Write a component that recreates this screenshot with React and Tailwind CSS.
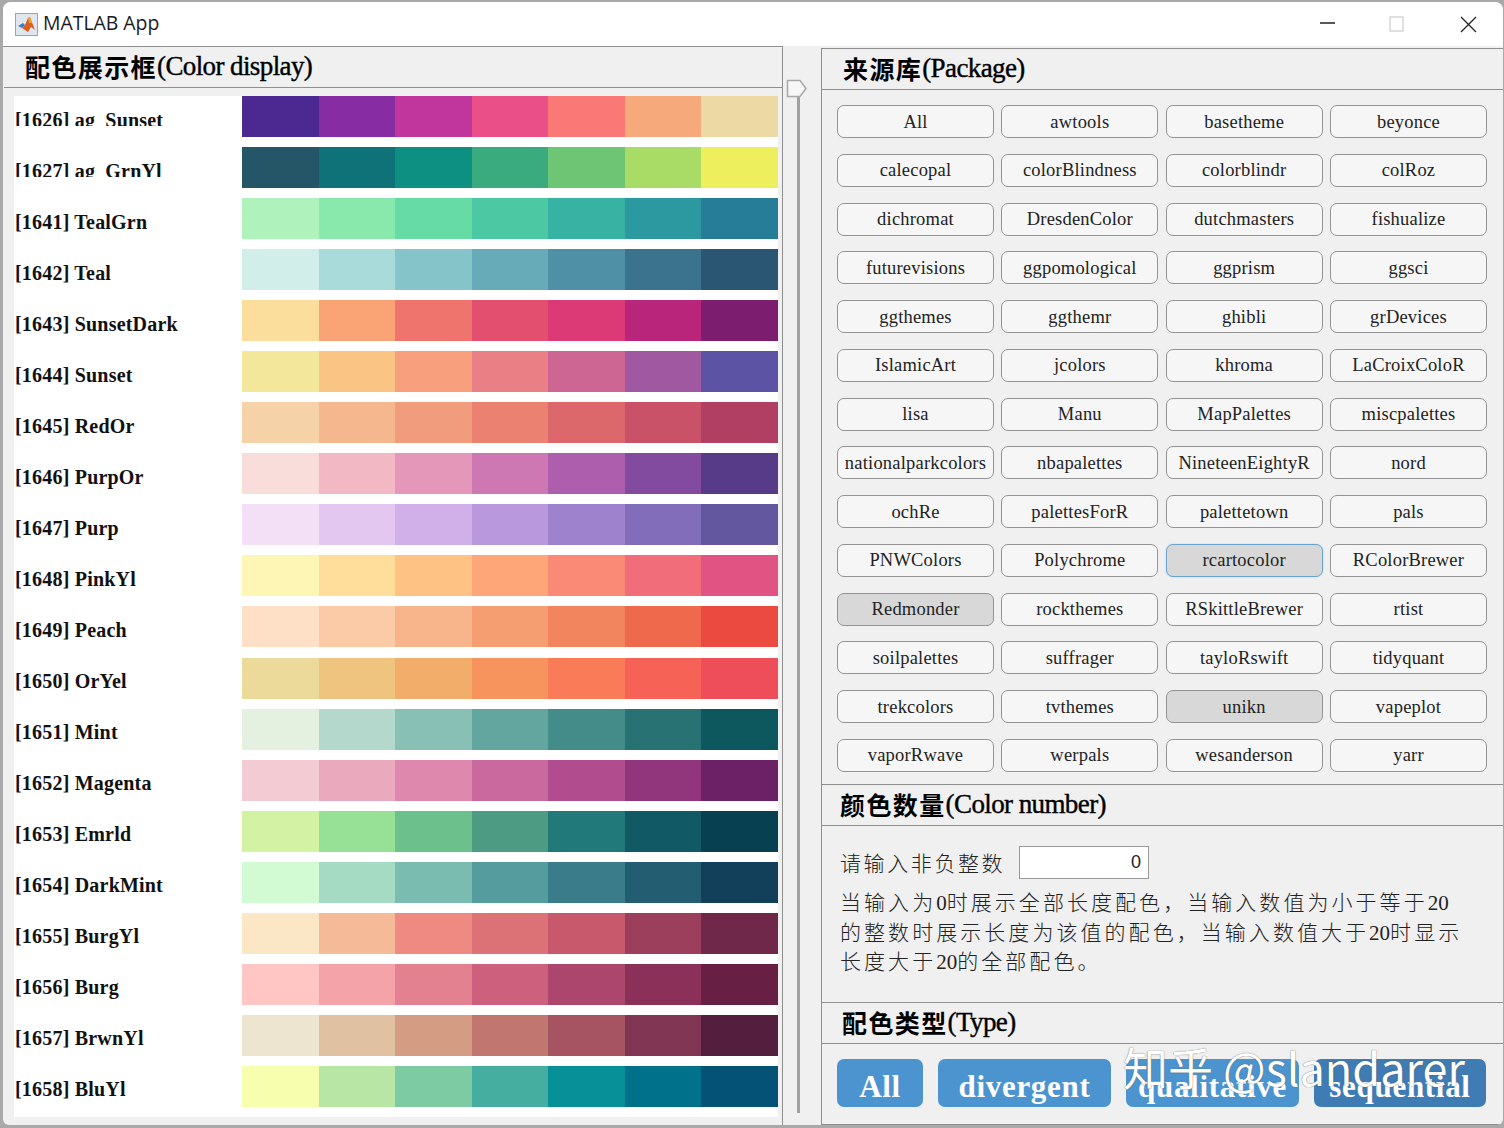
const palettes = [
  ["[1626] ag_Sunset", ["#4b2991","#872ca2","#c0369d","#ea4f88","#fa7876","#f6a97a","#edd9a3"], true],
  ["[1627] ag_GrnYl", ["#245668","#0f7279","#0d8f81","#39ab7e","#6ec574","#a9dc67","#edef5d"], true],
  ["[1641] TealGrn", ["#b0f2bc","#89e8ac","#67dba5","#4cc8a3","#38b2a3","#2c98a0","#257d98"]],
  ["[1642] Teal", ["#d1eeea","#a8dbd9","#85c4c9","#68abb8","#4f90a6","#3b738f","#2a5674"]],
  ["[1643] SunsetDark", ["#fcde9c","#faa476","#f0746e","#e34f6f","#dc3977","#b9257a","#7c1d6f"]],
  ["[1644] Sunset", ["#f3e79b","#fac484","#f8a07e","#eb7f86","#ce6693","#a059a0","#5c53a5"]],
  ["[1645] RedOr", ["#f6d2a9","#f5b78e","#f19c7c","#ea8171","#dd686c","#ca5268","#b13f64"]],
  ["[1646] PurpOr", ["#f9ddda","#f2b9c4","#e597b9","#ce78b3","#ad5fad","#834ba0","#573b88"]],
  ["[1647] Purp", ["#f3e0f7","#e4c7f1","#d1afe8","#b998dd","#9f82ce","#826dba","#63589f"]],
  ["[1648] PinkYl", ["#fef6b5","#ffdd9a","#ffc285","#ffa679","#fa8a76","#f16d7a","#e15383"]],
  ["[1649] Peach", ["#fde0c5","#facba6","#f8b58b","#f59e72","#f2855d","#ef6a4c","#eb4a40"]],
  ["[1650] OrYel", ["#ecda9a","#efc47e","#f3ad6a","#f7945d","#f97b57","#f66356","#ee4d5a"]],
  ["[1651] Mint", ["#e4f1e1","#b4d9cc","#89c0b6","#63a6a0","#448c8a","#287274","#0d585f"]],
  ["[1652] Magenta", ["#f3cbd3","#eaa9bd","#dd88ac","#ca699d","#b14d8e","#91357d","#6c2167"]],
  ["[1653] Emrld", ["#d3f2a3","#97e196","#6cc08b","#4c9b82","#217a79","#105965","#074050"]],
  ["[1654] DarkMint", ["#d2fbd4","#a5dbc2","#7bbcb0","#559c9e","#3a7c89","#235d72","#123f5a"]],
  ["[1655] BurgYl", ["#fbe6c5","#f5ba98","#ee8a82","#dc7176","#c8586c","#9c3f5d","#70284a"]],
  ["[1656] Burg", ["#ffc6c4","#f4a3a8","#e38191","#cc607d","#ad466c","#8b3058","#672044"]],
  ["[1657] BrwnYl", ["#ede5cf","#e0c2a2","#d39c83","#c1766f","#a65461","#813753","#541f3f"]],
  ["[1658] BluYl", ["#f7feae","#b7e6a5","#7ccba2","#46aea0","#089099","#00718b","#045275"]],
];

const packages = ["All","awtools","basetheme","beyonce","calecopal","colorBlindness","colorblindr","colRoz","dichromat","DresdenColor","dutchmasters","fishualize","futurevisions","ggpomological","ggprism","ggsci","ggthemes","ggthemr","ghibli","grDevices","IslamicArt","jcolors","khroma","LaCroixColoR","lisa","Manu","MapPalettes","miscpalettes","nationalparkcolors","nbapalettes","NineteenEightyR","nord","ochRe","palettesForR","palettetown","pals","PNWColors","Polychrome","rcartocolor","RColorBrewer","Redmonder","rockthemes","RSkittleBrewer","rtist","soilpalettes","suffrager","tayloRswift","tidyquant","trekcolors","tvthemes","unikn","vapeplot","vaporRwave","werpals","wesanderson","yarr"];

const serif = "font-['Liberation_Serif','Noto_Sans_CJK_SC',serif]";

function Heading({ cjk, latin, cls }) {
  return (
    <div className={"h-[41px] shrink-0 flex items-center border-b border-[#8f8f8f] text-black pb-[2px] font-['Liberation_Serif',serif] " + cls}>
      <span className="font-['Noto_Sans_CJK_SC',sans-serif] font-bold text-[25px] tracking-[1.4px] leading-none">{cjk}</span>
      <span className="text-[27px] tracking-[-0.6px] leading-none [-webkit-text-stroke:0.4px_black]">{latin}</span>
    </div>
  );
}

function PackageButton({ name }) {
  let state = "bg-[#f6f6f6] border-[#939393]";
  if (name === "rcartocolor") state = "bg-[#d8d8d8] border-[#6ba3cf] shadow-[0_0_2px_#a9d4f2]";
  if (name === "Redmonder" || name === "unikn") state = "bg-[#d8d8d8] border-[#939393]";
  return (
    <div className={"h-[33px] rounded-[7px] border flex items-center justify-center whitespace-nowrap text-[18.5px] tracking-[0.2px] text-[#222] pt-[2px] " + state}>
      {name}
    </div>
  );
}

function TypeButton({ w, dark, children }) {
  return (
    <div className={"h-[48px] rounded-[7px] flex items-center justify-center text-white font-bold text-[31px] tracking-[0.7px] pt-[8px] " + w + " " + (dark ? "bg-[#3f7cb3]" : "bg-[#4c94d0]")}>
      {children}
    </div>
  );
}

function MatlabIcon() {
  return (
    <div className="w-[23px] h-[23px] bg-[#dfe6ee] border border-[#9aa5b1] flex items-center justify-center">
      <svg width="19" height="19" viewBox="0 0 19 19">
        <path d="M1 11 L6 8 L8 10 L5 13 Z" fill="#3a7fc4" />
        <path d="M5 13 L8 10 L11 3 L13 2 L18 15 L14 12 L11 17 Z" fill="#d9601f" />
        <path d="M11 3 L13 2 L15 8 L12 8 Z" fill="#f0a030" />
      </svg>
    </div>
  );
}

function Digits({ children }) {
  return <span className="tracking-normal">{children}</span>;
}

export default function App() {
  return (
    <div className="relative w-[1504px] h-[1128px] overflow-hidden bg-[#a9a9a9] pt-[2px] pl-[3px] pr-[1px] pb-[3px]">
      <div className="w-full h-full flex flex-col bg-[#f0f0f0] rounded-t-[8px] rounded-b-[6px] overflow-hidden">
        <div className="h-[44px] shrink-0 bg-white flex items-center pl-[12px]">
          <MatlabIcon />
          <span className="ml-[5px] mb-[2px] text-[19.4px] text-[#1a1a1a] font-['Open_Sans',sans-serif]">MATLAB App</span>
          <div className="ml-auto flex items-center">
            <svg width="16" height="16" viewBox="0 0 16 16" className="mr-[53px] mb-[2px]"><path d="M0 8 H15" stroke="#222" strokeWidth="1.3" /></svg>
            <svg width="15" height="16" viewBox="0 0 15 16" className="mr-[56px]"><rect x="1" y="1" width="13" height="14" fill="none" stroke="#d0d0d0" strokeWidth="1.3" /></svg>
            <svg width="17" height="17" viewBox="0 0 17 17" className="mr-[26px]"><path d="M1 1 L16 16 M16 1 L1 16" stroke="#222" strokeWidth="1.3" /></svg>
          </div>
        </div>

        <div className="flex-1 flex min-h-0">
          <div className="w-[780px] shrink-0 flex flex-col border-t border-r border-[#8f8f8f] pl-[1px]">
            <Heading cjk="配色展示框" latin="(Color display)" cls="pl-[21px]" />
            <div className="pl-[10px] pt-[8px]">
              <div className={"bg-white h-[1021px] w-[764px] flex flex-col gap-[10.05px] " + serif}>
                {palettes.map(([label, colors, clipped]) => (
                  <div key={label} className="h-[41px] flex shrink-0">
                    <div className="w-[228px] pl-[1px] pt-[12.53px] text-[20px] font-bold text-[#111] tracking-[0.2px] leading-[22px] whitespace-pre">
                      <div className={clipped ? "h-[17px] overflow-hidden" : ""}>{label}</div>
                    </div>
                    <div className="flex-1 flex">
                      {colors.map((c) => (
                        <div key={c} className="flex-1" style={{ backgroundColor: c }} />
                      ))}
                    </div>
                  </div>
                ))}
              </div>
            </div>
          </div>

          <div className="w-[38px] shrink-0 relative">
            <div className="absolute left-[14px] top-[49px] bottom-[12px] w-[3px] bg-[#a0a0a0]" />
            <svg width="22" height="19" viewBox="0 0 22 19" className="absolute left-[3px] top-[33px]">
              <path d="M1.5 1.5 H14 L20 9.5 L14 17.5 H1.5 Z" fill="#f7f7f7" stroke="#a8a8a8" strokeWidth="1.5" />
            </svg>
          </div>

          <div className={"flex-1 flex flex-col border-l border-t border-b border-[#8f8f8f] mt-[2px] " + serif}>
            <Heading cjk="来源库" latin="(Package)" cls="pl-[21px]" />
            <div className="h-[695px] shrink-0 border-b border-[#8f8f8f] pl-[15px] pr-[16px] pt-[15px]">
              <div className="grid grid-cols-4 gap-x-[7.3px] gap-y-[15.75px]">
                {packages.map((p) => (
                  <PackageButton key={p} name={p} />
                ))}
              </div>
            </div>
            <Heading cjk="颜色数量" latin="(Color number)" cls="pl-[18px]" />
            <div className="h-[177px] shrink-0 border-b border-[#8f8f8f] pl-[18px] pt-[20px]">
              <div className="flex items-center h-[33px]">
                <span className="font-['Noto_Sans_CJK_SC',sans-serif] font-light text-[21px] tracking-[2.6px] text-[#222] w-[179px]">请输入非负整数</span>
                <div className="w-[130px] h-[33px] bg-white border border-[#9a9a9a] flex items-center justify-end pr-[7px] text-[18px] text-[#222] font-['Liberation_Sans',sans-serif]">0</div>
              </div>
              <div className="mt-[10px] font-['Liberation_Serif','Noto_Sans_CJK_SC',sans-serif] font-light text-[21px] tracking-[3.05px] leading-[29.5px] text-[#222] whitespace-nowrap">
                <div>当输入为<Digits>0</Digits>时展示全部长度配色，当输入数值为小于等于<Digits>20</Digits></div>
                <div>的整数时展示长度为该值的配色，当输入数值大于<Digits>20</Digits>时显示</div>
                <div>长度大于<Digits>20</Digits>的全部配色。</div>
              </div>
            </div>
            <Heading cjk="配色类型" latin="(Type)" cls="pl-[20px]" />
            <div className="flex pl-[15px] pt-[15px] gap-[15px]">
              <TypeButton w="w-[86px]">All</TypeButton>
              <TypeButton w="w-[173px]">divergent</TypeButton>
              <TypeButton w="w-[173px]">qualitative</TypeButton>
              <TypeButton w="w-[172px]" dark>sequential</TypeButton>
            </div>
          </div>
        </div>
      </div>
      <div className="absolute left-[1123px] top-[1037px] text-[45px] leading-[60px] whitespace-nowrap text-white font-['Noto_Sans_CJK_SC',sans-serif] font-normal [text-shadow:0_0_1px_#444]">
        知乎 @slandarer
      </div>
    </div>
  );
}
